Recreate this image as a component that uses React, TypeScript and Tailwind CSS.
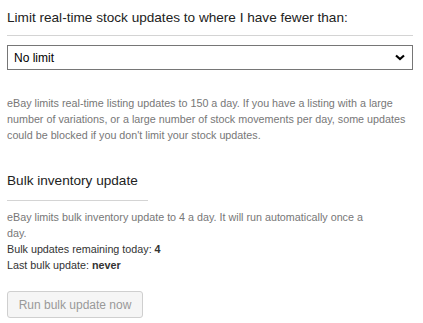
const App = () => {
  return (
    <div className="min-h-screen bg-white pl-[7px] pr-[10px] font-['Liberation_Sans',Arial,sans-serif] text-[#333]">
      <h3 className="pt-[10px] pb-[9px] text-[13.6px] leading-[16px] text-[#222] border-b border-[#d4d4d4]">
        Limit real-time stock updates to where I have fewer than:
      </h3>
      <div className="mt-[9px] h-[25px] border border-[#767676] flex items-center justify-between pl-[6px] pr-[7px] text-[12px] text-black">
        <span>No limit</span>
        <svg width="10" height="7" viewBox="0 0 10 7">
          <path d="M1 1.5 L5 5 L9 1.5" fill="none" stroke="#000" strokeWidth="2.2" />
        </svg>
      </div>
      <p className="mt-[25px] text-[10.75px] leading-[16px] text-[#777]">
        eBay limits real-time listing updates to 150 a day. If you have a listing with a large
        number of variations, or a large number of stock movements per day, some updates
        could be blocked if you don't limit your stock updates.
      </p>

      <div className="w-[372px] mt-[30px]">
        <h3 className="w-fit pr-[10px] pb-[11px] text-[13.6px] leading-[16px] text-[#222] border-b border-[#d4d4d4]">
          Bulk inventory update
        </h3>
        <div className="mt-[8px] text-[10.75px] leading-[16px]">
          <p className="text-[#777]">
            eBay limits bulk inventory update to 4 a day. It will run automatically once a day.
          </p>
          <p>
            Bulk updates remaining today: <span className="font-bold">4</span>
          </p>
          <p>
            Last bulk update: <span className="font-bold">never</span>
          </p>
        </div>
        <button
          disabled
          className="mt-[18px] h-[27px] w-[136px] rounded-[3px] border border-[#cfcfcf] bg-[#f5f5f5] text-[12px] text-[#999]"
        >
          Run bulk update now
        </button>
      </div>
    </div>
  );
};

export default App;
